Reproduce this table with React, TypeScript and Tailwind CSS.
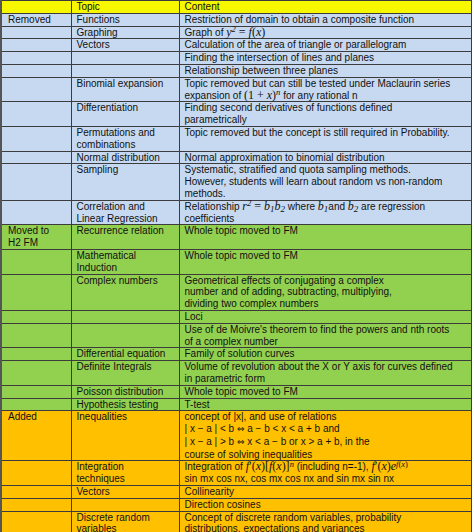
import type { ReactNode } from 'react'

type Row = {
  group?: ReactNode
  topic?: ReactNode
  content?: ReactNode
  tone: 'head' | 'blue' | 'green' | 'orange'
}

const tones = {
  head: 'bg-[#f7f700]',
  blue: 'bg-[#c6d9f0]',
  green: 'bg-[#92d050]',
  orange: 'bg-[#ffc000]',
}

// math bits are set in a serif italic, a touch larger than the body text
const M = ({ children }: { children: ReactNode }) => (
  <span className="font-['Liberation_Serif',serif] text-[12px] leading-[10px] italic">{children}</span>
)

const Sup = ({ children }: { children: ReactNode }) => (
  <sup className="top-[-0.45em] text-[8.5px]">{children}</sup>
)

const Iff = () => <span className="font-['DejaVu_Sans',sans-serif] text-[9px]">⇔</span>

const rows: Row[] = [
  { tone: 'head', topic: 'Topic', content: 'Content' },
  { tone: 'blue', group: 'Removed', topic: 'Functions', content: 'Restriction of domain to obtain a composite function' },
  {
    tone: 'blue',
    topic: 'Graphing',
    content: (
      <>
        Graph of{' '}
        <M>
          y<Sup>2</Sup> <span className="not-italic">=</span> f<span className="not-italic">(</span>x
          <span className="not-italic">)</span>
        </M>
      </>
    ),
  },
  { tone: 'blue', topic: 'Vectors', content: 'Calculation of the area of triangle or parallelogram' },
  { tone: 'blue', content: 'Finding the intersection of lines and planes' },
  { tone: 'blue', content: 'Relationship between three planes' },
  {
    tone: 'blue',
    topic: 'Binomial expansion',
    content: (
      <>
        Topic removed but can still be tested under Maclaurin series
        <br />
        expansion of{' '}
        <M>
          <span className="not-italic">(1 + </span>x<span className="not-italic">)</span>
          <Sup>n</Sup>
        </M>{' '}
        for any rational n
      </>
    ),
  },
  {
    tone: 'blue',
    topic: 'Differentiation',
    content: (
      <>
        Finding second derivatives of functions defined
        <br />
        parametrically
      </>
    ),
  },
  {
    tone: 'blue',
    topic: (
      <>
        Permutations and
        <br />
        combinations
      </>
    ),
    content: 'Topic removed but the concept is still required in Probability.',
  },
  { tone: 'blue', topic: 'Normal distribution', content: 'Normal approximation to binomial distribution' },
  {
    tone: 'blue',
    topic: 'Sampling',
    content: (
      <>
        Systematic, stratified and quota sampling methods.
        <br />
        However, students will learn about random vs non-random
        <br />
        methods.
      </>
    ),
  },
  {
    tone: 'blue',
    topic: (
      <>
        Correlation and
        <br />
        Linear Regression
      </>
    ),
    content: (
      <>
        Relationship{' '}
        <M>
          r<Sup>2</Sup> <span className="not-italic">=</span> b<sub>1</sub>b<sub>2</sub>
        </M>{' '}
        where{' '}
        <M>
          b<sub>1</sub>
        </M>
        and{' '}
        <M>
          b<sub>2</sub>
        </M>{' '}
        are regression
        <br />
        coefficients
      </>
    ),
  },
  {
    tone: 'green',
    group: (
      <>
        Moved to
        <br />
        H2 FM
      </>
    ),
    topic: 'Recurrence relation',
    content: 'Whole topic moved to FM',
  },
  {
    tone: 'green',
    topic: (
      <>
        Mathematical
        <br />
        Induction
      </>
    ),
    content: 'Whole topic moved to FM',
  },
  {
    tone: 'green',
    topic: 'Complex numbers',
    content: (
      <>
        Geometrical effects of conjugating a complex
        <br />
        number and of adding, subtracting, multiplying,
        <br />
        dividing two complex numbers
      </>
    ),
  },
  { tone: 'green', content: 'Loci' },
  {
    tone: 'green',
    content: (
      <>
        Use of de Moivre's theorem to find the powers and nth roots
        <br />
        of a complex number
      </>
    ),
  },
  { tone: 'green', topic: 'Differential equation', content: 'Family of solution curves' },
  {
    tone: 'green',
    topic: 'Definite Integrals',
    content: (
      <>
        Volume of revolution about the X or Y axis for curves defined
        <br />
        in parametric form
      </>
    ),
  },
  { tone: 'green', topic: 'Poisson distribution', content: 'Whole topic moved to FM' },
  { tone: 'green', topic: 'Hypothesis testing', content: 'T-test' },
  {
    tone: 'orange',
    group: 'Added',
    topic: 'Inequalities',
    content: (
      <>
        concept of |x|, and use of relations
        <br />| x − a | &lt; b <Iff /> a − b &lt; x &lt; a + b and
        <br />| x − a | &gt; b <Iff /> x &lt; a − b or x &gt; a + b, in the
        <br />
        course of solving inequalities
      </>
    ),
  },
  {
    tone: 'orange',
    topic: (
      <>
        Integration
        <br />
        techniques
      </>
    ),
    content: (
      <>
        Integration of{' '}
        <M>
          f<span className="not-italic">′(</span>x<span className="not-italic">)[</span>f
          <span className="not-italic">(</span>x<span className="not-italic">)]</span>
          <Sup>n</Sup>
        </M>{' '}
        (including n=-1),{' '}
        <M>
          f<span className="not-italic">′(</span>x<span className="not-italic">)</span>e
          <Sup>
            f<span className="not-italic">(</span>x<span className="not-italic">)</span>
          </Sup>
        </M>
        <br />
        sin mx cos nx, cos mx cos nx and sin mx sin nx
      </>
    ),
  },
  { tone: 'orange', topic: 'Vectors', content: 'Collinearity' },
  { tone: 'orange', content: 'Direction cosines' },
  {
    tone: 'orange',
    topic: (
      <>
        Discrete random
        <br />
        variables
      </>
    ),
    content: (
      <>
        Concept of discrete random variables, probability
        <br />
        distributions, expectations and variances
      </>
    ),
  },
]

export default function App() {
  return (
    <div className="h-[532px] w-[474px] overflow-hidden bg-white font-['Liberation_Sans',Arial,sans-serif] text-[10px] leading-[11.8px] text-[#111]">
      <table className="w-[472px] table-fixed border-collapse border-l-2 border-l-[#555]">
        <colgroup>
          <col className="w-[70px]" />
          <col className="w-[108px]" />
          <col />
        </colgroup>
        <tbody>
          {rows.map((r, i) => (
            <tr key={i} className={tones[r.tone]}>
              <td className="whitespace-nowrap border border-[#3c3c3c] px-[6px] align-top">{r.group}</td>
              <td className="whitespace-nowrap border border-[#3c3c3c] px-[5px] align-top">{r.topic}</td>
              <td className="whitespace-nowrap border border-[#3c3c3c] px-[5px] align-top">{r.content}</td>
            </tr>
          ))}
        </tbody>
      </table>
    </div>
  )
}
